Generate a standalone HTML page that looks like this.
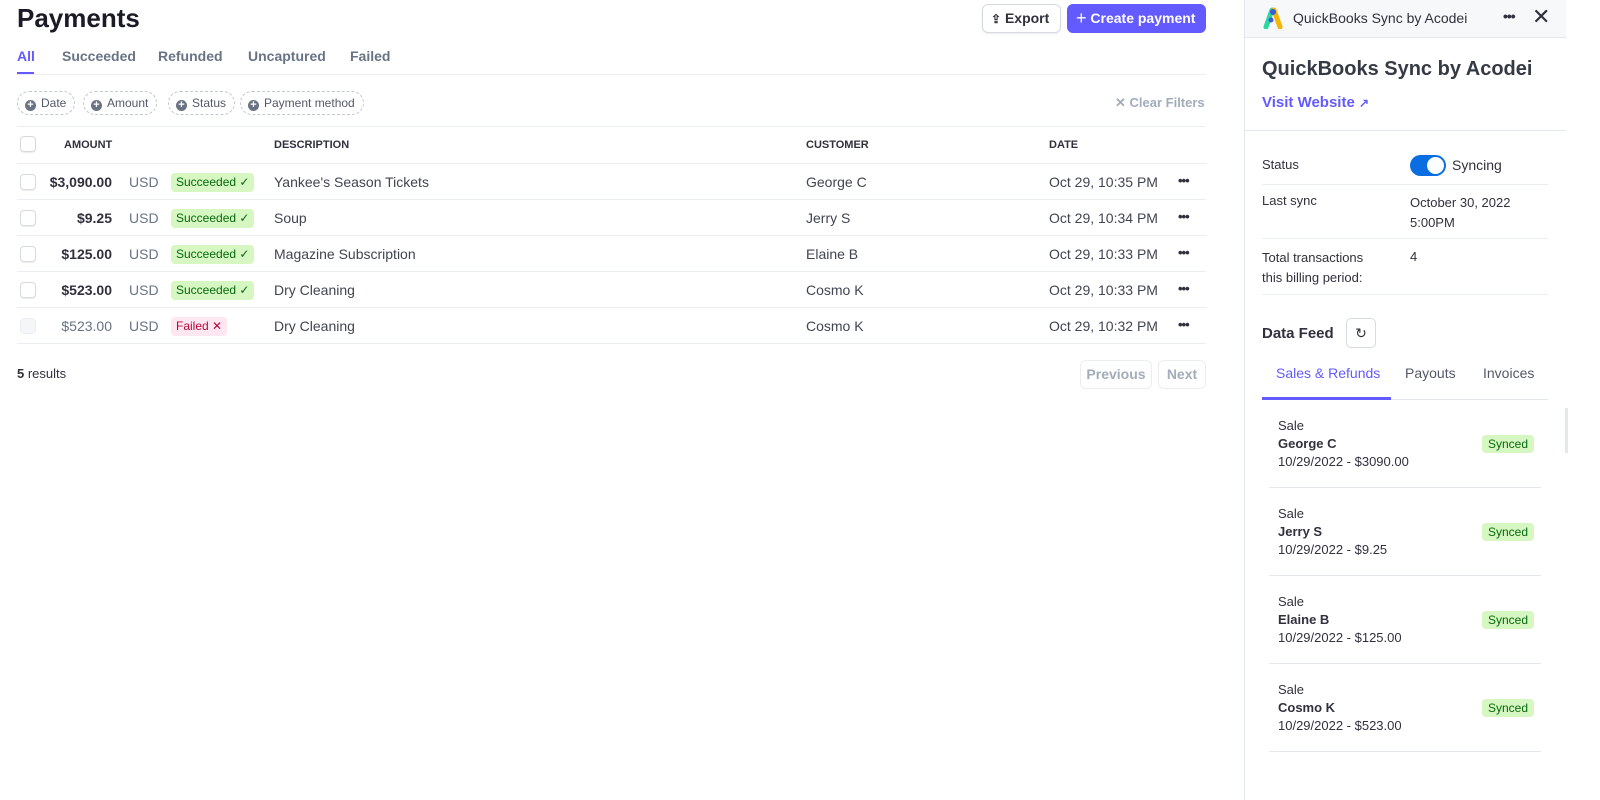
<!DOCTYPE html>
<html><head><meta charset="utf-8"><style>
*{box-sizing:border-box;margin:0;padding:0}
body{width:1600px;height:800px;overflow:hidden;background:#fff;font-family:"Liberation Sans",sans-serif;color:#30313d;font-size:14px;position:relative}
.a{position:absolute;white-space:nowrap}
.hr{position:absolute;height:1px;background:#ebeef1}
.pill{position:absolute;top:91px;height:24px;border:1px dashed #c0c8d2;border-radius:12px;font-size:12px;color:#545969;padding:0 8px 0 7px;line-height:22px}
.pill i{display:inline-block;width:11px;height:11px;border-radius:50%;background:#6a7383;color:#fff;font-style:normal;font-size:11px;line-height:11px;text-align:center;font-weight:bold;margin-right:5px;vertical-align:-1px}
.th{font-size:11px;font-weight:bold;color:#30313d;top:139px}
.cb{position:absolute;left:20px;width:16px;height:16px;border:1px solid #d5dbe1;border-radius:4px;box-shadow:0 1px 1px rgba(0,0,0,.08)}
.badge{position:absolute;left:171px;height:19px;border-radius:4px;font-size:12px;line-height:19px;padding:0 5px}
.ok{background:#d7f7c2;color:#05690d}
.bad{background:#ffe7f2;color:#b3093c}
.dots{position:absolute;left:1178px;font-weight:bold;font-size:13px;letter-spacing:-1px}
.synced{position:absolute;left:1482px;background:#d7f7c2;color:#05690d;font-size:12px;padding:2px 6px;border-radius:4px}
</style></head><body>
<div class="a" style="left:17px;top:3px;font-size:26px;font-weight:bold;color:#1a1b25">Payments</div>
<div class="a" style="left:982px;top:4px;width:79px;height:29px;border:1px solid #d5dbe1;border-radius:6px;font-size:14px;font-weight:bold;line-height:27px;padding-left:8px;box-shadow:0 1px 2px rgba(0,0,0,.08)"><span style="font-size:12px">⇪</span> Export</div>
<div class="a" style="left:1067px;top:4px;width:139px;height:29px;background:#635bff;border-radius:6px;color:#fff;font-size:14px;font-weight:bold;line-height:29px;padding-left:9px"><span style="font-size:18px;font-weight:normal;vertical-align:-1px">+</span> Create payment</div>
<div class="a" style="left:17px;top:48px;font-size:14px;font-weight:bold;color:#635bff">All</div>
<div class="a" style="left:17px;top:72px;width:17px;height:2px;background:#635bff"></div>
<div class="a" style="left:62px;top:48px;font-weight:bold;color:#687385">Succeeded</div>
<div class="a" style="left:158px;top:48px;font-weight:bold;color:#687385">Refunded</div>
<div class="a" style="left:248px;top:48px;font-weight:bold;color:#687385">Uncaptured</div>
<div class="a" style="left:350px;top:48px;font-weight:bold;color:#687385">Failed</div>
<div class="hr" style="left:17px;top:74px;width:1189px"></div>
<div class="pill" style="left:17px"><i>+</i>Date</div>
<div class="pill" style="left:83px"><i>+</i>Amount</div>
<div class="pill" style="left:168px"><i>+</i>Status</div>
<div class="pill" style="left:240px"><i>+</i>Payment method</div>
<div class="a" style="left:1115px;top:95px;font-weight:bold;color:#a3acba;font-size:13px">✕ Clear Filters</div>
<div class="hr" style="left:17px;top:126px;width:1189px"></div>
<div class="cb" style="top:136px"></div>
<div class="a th" style="left:64px">AMOUNT</div>
<div class="a th" style="left:274px">DESCRIPTION</div>
<div class="a th" style="left:806px">CUSTOMER</div>
<div class="a th" style="left:1049px">DATE</div>
<div class="hr" style="left:17px;top:163px;width:1189px"></div>

<div class="cb" style="top:174px"></div>
<div class="a" style="right:1488px;top:174px;font-weight:bold">$3,090.00</div>
<div class="a" style="left:129px;top:174px;color:#687385">USD</div>
<div class="badge ok" style="top:173px">Succeeded ✓</div>
<div class="a" style="left:274px;top:174px;color:#414552">Yankee's Season Tickets</div>
<div class="a" style="left:806px;top:174px;color:#414552">George C</div>
<div class="a" style="left:1049px;top:174px;color:#414552">Oct 29, 10:35 PM</div>
<div class="dots" style="top:173px">•••</div>
<div class="hr" style="left:17px;top:199px;width:1189px"></div>

<div class="cb" style="top:210px"></div>
<div class="a" style="right:1488px;top:210px;font-weight:bold">$9.25</div>
<div class="a" style="left:129px;top:210px;color:#687385">USD</div>
<div class="badge ok" style="top:209px">Succeeded ✓</div>
<div class="a" style="left:274px;top:210px;color:#414552">Soup</div>
<div class="a" style="left:806px;top:210px;color:#414552">Jerry S</div>
<div class="a" style="left:1049px;top:210px;color:#414552">Oct 29, 10:34 PM</div>
<div class="dots" style="top:209px">•••</div>
<div class="hr" style="left:17px;top:235px;width:1189px"></div>

<div class="cb" style="top:246px"></div>
<div class="a" style="right:1488px;top:246px;font-weight:bold">$125.00</div>
<div class="a" style="left:129px;top:246px;color:#687385">USD</div>
<div class="badge ok" style="top:245px">Succeeded ✓</div>
<div class="a" style="left:274px;top:246px;color:#414552">Magazine Subscription</div>
<div class="a" style="left:806px;top:246px;color:#414552">Elaine B</div>
<div class="a" style="left:1049px;top:246px;color:#414552">Oct 29, 10:33 PM</div>
<div class="dots" style="top:245px">•••</div>
<div class="hr" style="left:17px;top:271px;width:1189px"></div>

<div class="cb" style="top:282px"></div>
<div class="a" style="right:1488px;top:282px;font-weight:bold">$523.00</div>
<div class="a" style="left:129px;top:282px;color:#687385">USD</div>
<div class="badge ok" style="top:281px">Succeeded ✓</div>
<div class="a" style="left:274px;top:282px;color:#414552">Dry Cleaning</div>
<div class="a" style="left:806px;top:282px;color:#414552">Cosmo K</div>
<div class="a" style="left:1049px;top:282px;color:#414552">Oct 29, 10:33 PM</div>
<div class="dots" style="top:281px">•••</div>
<div class="hr" style="left:17px;top:307px;width:1189px"></div>

<div class="cb" style="top:318px;background:#f5f6f8;border-color:#ebeef1;box-shadow:none"></div>
<div class="a" style="right:1488px;top:318px;color:#687385">$523.00</div>
<div class="a" style="left:129px;top:318px;color:#687385">USD</div>
<div class="badge bad" style="top:317px">Failed ✕</div>
<div class="a" style="left:274px;top:318px;color:#414552">Dry Cleaning</div>
<div class="a" style="left:806px;top:318px;color:#414552">Cosmo K</div>
<div class="a" style="left:1049px;top:318px;color:#414552">Oct 29, 10:32 PM</div>
<div class="dots" style="top:317px">•••</div>
<div class="hr" style="left:17px;top:343px;width:1189px"></div>

<div class="a" style="left:17px;top:366px;font-size:13px"><b>5</b> results</div>
<div class="a" style="left:1080px;top:360px;width:72px;height:29px;border:1px solid #ebeef1;border-radius:6px;color:#a3acba;font-weight:bold;line-height:27px;text-align:center">Previous</div>
<div class="a" style="left:1158px;top:360px;width:48px;height:29px;border:1px solid #ebeef1;border-radius:6px;color:#a3acba;font-weight:bold;line-height:27px;text-align:center">Next</div>

<div class="a" style="left:1244px;top:0;width:1px;height:800px;background:#e3e8ee"></div>
<div class="a" style="left:1245px;top:0;width:321px;height:38px;background:#f6f8fa;border-bottom:1px solid #e3e8ee"></div>
<svg class="a" style="left:1262px;top:7px" width="22" height="22" viewBox="0 0 22 22"><path d="M4 20 L10 3" stroke="#2ed6a0" stroke-width="5" stroke-linecap="round"/><path d="M12 3 L18 20" stroke="#f7b500" stroke-width="5" stroke-linecap="round"/><circle cx="11" cy="5" r="3" fill="#3b5bdb"/><circle cx="9" cy="13" r="2.5" fill="#3b5bdb"/></svg>
<div class="a" style="left:1293px;top:10px;font-size:14px;color:#30313d">QuickBooks Sync by Acodei</div>
<div class="a" style="left:1503px;top:8px;font-weight:bold;font-size:14px;letter-spacing:-1px">•••</div>
<div class="a" style="left:1532px;top:4px;font-size:22px;color:#30313d">✕</div>
<div class="a" style="left:1262px;top:58px;font-size:20px;font-weight:bold;color:#353a44">QuickBooks Sync by Acodei</div>
<div class="a" style="left:1262px;top:94px;font-size:15px;font-weight:bold;color:#635bff">Visit Website <span style="font-size:12px">↗</span></div>
<div class="hr" style="left:1245px;top:130px;width:321px;background:#e3e8ee"></div>
<div class="a" style="left:1262px;top:157px;font-size:13px">Status</div>
<div class="a" style="left:1410px;top:155px;width:36px;height:21px;border-radius:11px;background:#0a6ee0"><div style="position:absolute;right:2px;top:2px;width:17px;height:17px;border-radius:50%;background:#fff"></div></div>
<div class="a" style="left:1452px;top:157px;font-size:14px">Syncing</div>
<div class="hr" style="left:1262px;top:184px;width:286px"></div>
<div class="a" style="left:1262px;top:193px;font-size:13px">Last sync</div>
<div class="a" style="left:1410px;top:193px;font-size:13px;line-height:20px">October 30, 2022<br>5:00PM</div>
<div class="hr" style="left:1262px;top:238px;width:286px"></div>
<div class="a" style="left:1262px;top:248px;font-size:13px;line-height:20px">Total transactions<br>this billing period:</div>
<div class="a" style="left:1410px;top:249px;font-size:13px">4</div>
<div class="hr" style="left:1262px;top:294px;width:286px"></div>
<div class="a" style="left:1262px;top:325px;font-size:15px;font-weight:bold">Data Feed</div>
<div class="a" style="left:1346px;top:318px;width:30px;height:30px;border:1px solid #d5dbe1;border-radius:5px;text-align:center;line-height:28px;font-size:14px">↻</div>
<div class="a" style="left:1276px;top:365px;font-size:14px;color:#635bff">Sales &amp; Refunds</div>
<div class="a" style="left:1405px;top:365px;font-size:14px;color:#545969">Payouts</div>
<div class="a" style="left:1483px;top:365px;font-size:14px;color:#545969">Invoices</div>
<div class="hr" style="left:1262px;top:399px;width:286px;background:#e3e8ee"></div>
<div class="a" style="left:1262px;top:397px;width:129px;height:3px;background:#635bff"></div>

<div class="a" style="left:1278px;top:417px;font-size:13px;line-height:18px">Sale<br><b>George C</b><br>10/29/2022 - $3090.00</div>
<div class="synced" style="top:435px">Synced</div>
<div class="hr" style="left:1269px;top:487px;width:272px;background:#e3e8ee"></div>
<div class="a" style="left:1278px;top:505px;font-size:13px;line-height:18px">Sale<br><b>Jerry S</b><br>10/29/2022 - $9.25</div>
<div class="synced" style="top:523px">Synced</div>
<div class="hr" style="left:1269px;top:575px;width:272px;background:#e3e8ee"></div>
<div class="a" style="left:1278px;top:593px;font-size:13px;line-height:18px">Sale<br><b>Elaine B</b><br>10/29/2022 - $125.00</div>
<div class="synced" style="top:611px">Synced</div>
<div class="hr" style="left:1269px;top:663px;width:272px;background:#e3e8ee"></div>
<div class="a" style="left:1278px;top:681px;font-size:13px;line-height:18px">Sale<br><b>Cosmo K</b><br>10/29/2022 - $523.00</div>
<div class="synced" style="top:699px">Synced</div>
<div class="hr" style="left:1269px;top:751px;width:272px;background:#e3e8ee"></div>
<div class="a" style="left:1565px;top:408px;width:3px;height:45px;background:#e3e8ee"></div>
</body></html>
